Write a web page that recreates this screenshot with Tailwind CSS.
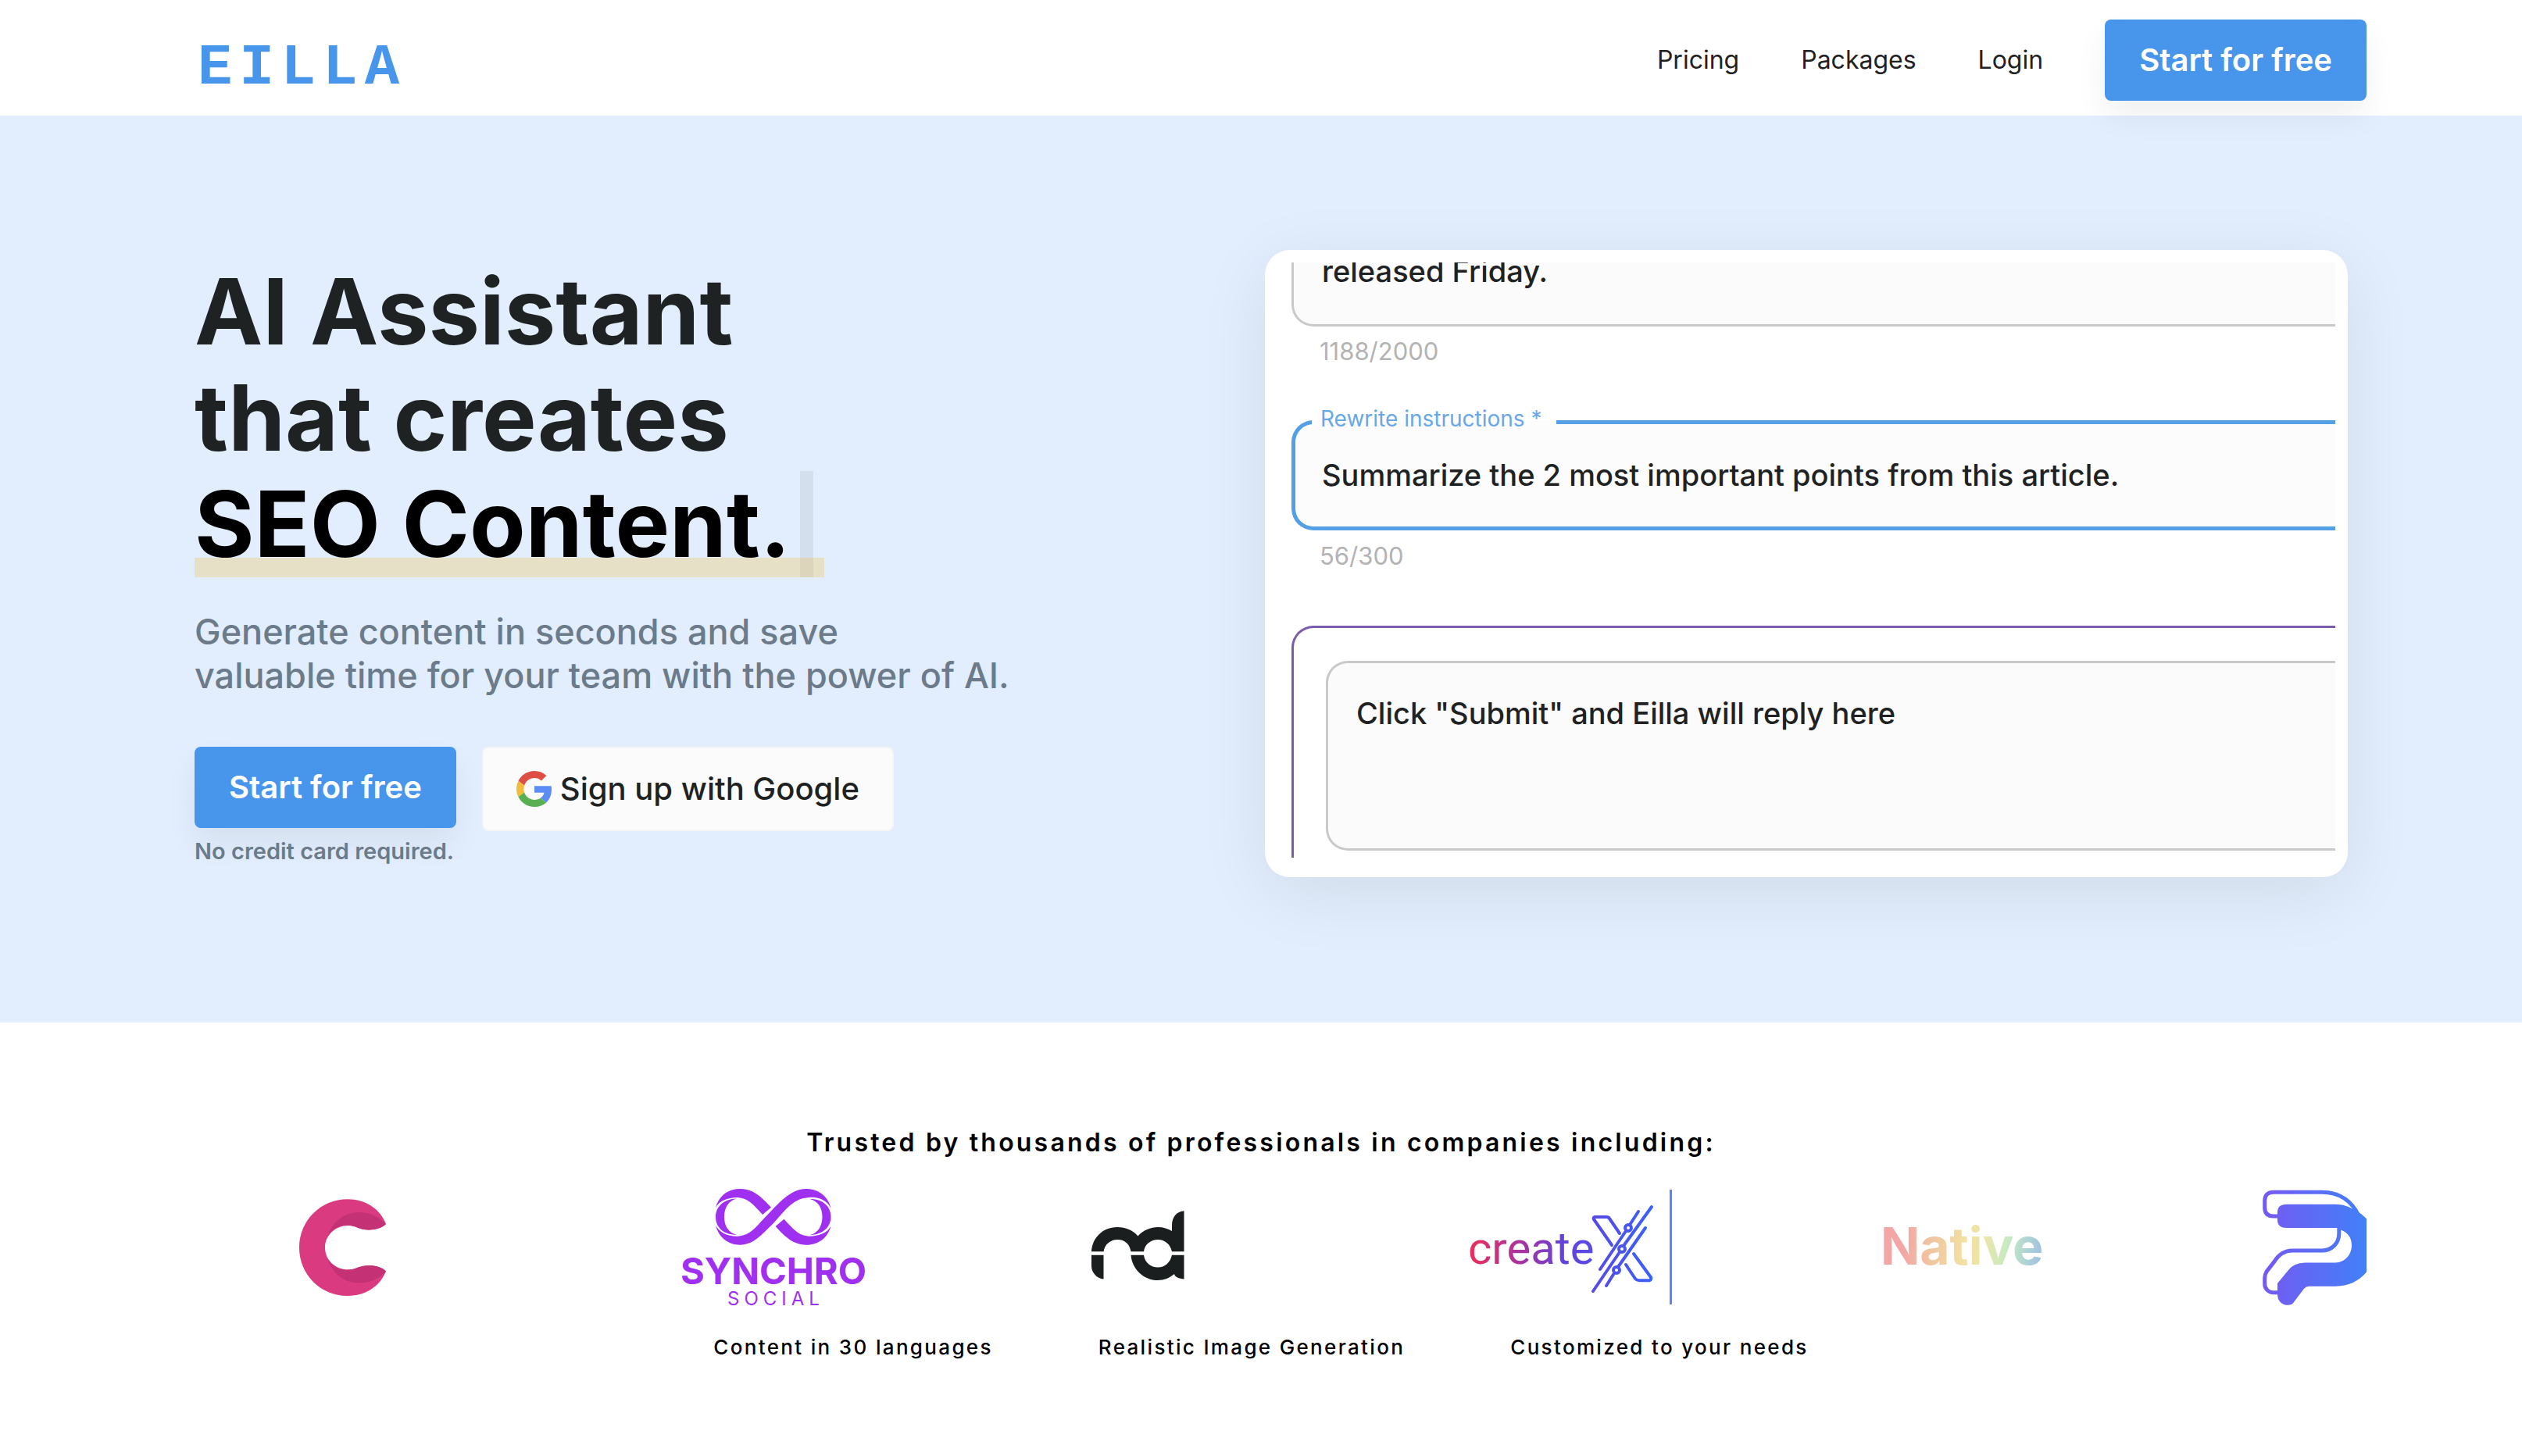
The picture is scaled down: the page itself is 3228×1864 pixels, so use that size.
<!DOCTYPE html>
<html lang="en">
<head>
<meta charset="utf-8">
<meta name="viewport" content="width=device-width, initial-scale=1">
<title>Eilla – AI Assistant that creates SEO Content</title>
<script src="https://cdn.jsdelivr.net/npm/@tailwindcss/browser@4"></script>
</head>
<body class="min-h-screen bg-white font-['Inter',sans-serif] text-[#1f2223]">

<header class="relative z-10 flex h-[148px] items-center justify-between bg-white pt-[6px] pl-[249px] pr-[199px]">
  <a href="#" class="pt-5 pl-1 font-['Liberation_Mono',monospace] text-[74px] leading-[64px] font-bold tracking-[9px] text-[#4895ec]">EILLA</a>
  <nav class="flex items-center gap-[79px] text-[32px] leading-[48px]">
    <a href="#">Pricing</a>
    <a href="#">Packages</a>
    <a href="#">Login</a>
    <button class="h-[104px] rounded-lg bg-[#4895ec] px-[44px] text-[40px] leading-[60px] font-semibold text-white shadow-[0_20px_40px_rgba(0,0,0,0.06)]">Start for free</button>
  </nav>
</header>

<main>
  <section class="grid grid-cols-[1370fr_1386fr] items-start bg-[#e2eefd] pt-[172px] pr-[223px] pb-[186px] pl-[249px]">
    <div class="pt-[11px]">
      <h1 class="text-[117px] leading-[136px] font-bold">
        AI Assistant<br>that creates<br>
        <span class="relative inline-flex pr-[14px] text-black">SEO Content.<span class="ml-3 w-[17px] bg-[#1f2223]/7"></span><span class="absolute inset-x-0 bottom-0 h-[25px] bg-[#f0c04a]/30"></span></span>
      </h1>
      <p class="mt-[42px] text-[45px] leading-[56px] font-medium text-[#6b7b8a]">Generate content in seconds and save<br>valuable time for your team with the power of AI.</p>
      <div class="mt-[63px] flex items-start gap-[33px]">
        <div>
          <button class="h-[104px] rounded-lg bg-[#4895ec] px-[44px] text-[40px] leading-[60px] font-semibold text-white shadow-[0_20px_40px_rgba(0,0,0,0.06)]">Start for free</button>
          <p class="mt-[9px] text-[29px] leading-[42px] font-semibold text-[#6b7b8a]">No credit card required.</p>
        </div>
        <button class="flex h-[108px] items-center gap-[10px] rounded-lg border-2 border-[#f4f5f6] bg-[#fbfbfb] px-[42px] text-[40px] leading-[60px] font-medium">
          <svg class="size-[46px]" viewBox="0 0 48 48" aria-hidden="true">
            <path fill="#dd4f43" d="M24 9.500c3.540 0 6.710 1.220 9.210 3.600l6.850-6.850C35.900 2.380 30.470 0 24 0 14.620 0 6.510 5.380 2.560 13.220l7.980 6.190C12.430 13.720 17.740 9.500 24 9.500z"/>
            <path fill="#5c8df5" d="M46.980 24.550c0-1.570-.150-3.090-.380-4.550H24v9.020h12.940c-.580 2.960-2.260 5.480-4.780 7.180l7.730 6c4.510-4.180 7.090-10.360 7.090-17.650z"/>
            <path fill="#f2bc3c" d="M10.530 28.590c-.480-1.450-.760-2.990-.760-4.590s.270-3.140.760-4.590l-7.980-6.190C.920 16.460 0 20.120 0 24c0 3.880.920 7.540 2.560 10.780l7.970-6.190z"/>
            <path fill="#58b052" d="M24 48c6.480 0 11.930-2.130 15.890-5.810l-7.730-6c-2.150 1.450-4.920 2.300-8.160 2.300-6.260 0-11.570-4.220-13.470-9.910l-7.980 6.190C6.510 42.620 14.620 48 24 48z"/>
          </svg>
          Sign up with Google
        </button>
      </div>
    </div>

    <div class="rounded-[32px] bg-white px-4 pt-4 pb-[25px] shadow-[0_20px_90px_rgba(0,0,0,0.08)]">
      <div class="flex h-[762px] flex-col overflow-hidden pl-[18px] text-[38px] leading-[48px] font-medium">
        <div class="h-[82px] shrink-0 overflow-hidden rounded-bl-[28px] border-b-[3px] border-l-[3px] border-[#c9c9c9] bg-[#fbfbfb]">
          <textarea readonly aria-label="Article" class="-mt-[13px] block h-20 w-full resize-none overflow-hidden pl-[36px] outline-none">released Friday.</textarea>
        </div>
        <p class="mt-3 pl-[36px] text-[31px] leading-10 font-normal text-[#b3b3b3]">1188/2000</p>
        <fieldset class="mt-[50px] h-[159px] shrink-0 rounded-l-[28px] border-[5px] border-r-0 border-[#549fe6] bg-[#fcfcfc]">
          <legend class="ml-[21px] pr-[18px] pl-[11px] pb-2 text-[28px] leading-8 font-normal text-[#68a8e6]"><label for="rewrite">Rewrite instructions *</label></legend>
          <input id="rewrite" type="text" readonly value="Summarize the 2 most important points from this article." class="mt-6 h-12 w-full bg-transparent pl-[34px] outline-none">
        </fieldset>
        <p class="mt-[13px] pl-[36px] text-[31px] leading-10 font-normal text-[#b3b3b3]">56/300</p>
        <div class="mt-[69px] flex-1 rounded-tl-[28px] border-t-[3px] border-l-[3px] border-[#7a5cab] pt-[42px] pl-[41px]">
          <textarea readonly aria-label="Eilla reply" class="block h-[243px] w-full resize-none overflow-hidden rounded-l-[28px] border-[3px] border-r-0 border-[#c9c9c9] bg-[#fbfbfb] pt-10 pl-[36px] outline-none">Click "Submit" and Eilla will reply here</textarea>
        </div>
      </div>
    </div>
  </section>

  <section class="pt-[130px]">
    <h2 class="text-center text-[32px] leading-[48px] font-semibold tracking-[0.1em] text-black">Trusted by thousands of professionals in companies including:</h2>

    <div class="mt-[35px] grid grid-cols-[487fr_527fr_485fr_529fr_485fr_133fr] pl-[383px] pr-[199px]">
      <svg class="h-[150px] w-28" viewBox="0 0 112 150" role="img" aria-label="C logo">
        <g transform="translate(0 12)">
          <path fill="#da3a80" d="M111 33C104 14 85 1.300 62 1.300 27 1.300 0 29 0 63.200S27 125 62 125c23 0 42-12.700 49-31.700-8-8-26-9.500-39-3.500C52 96 33 82 33 63.200 33 44.400 52 30 72 36.500c13 6.500 31 4.500 39-3.500z"/>
          <path id="fold" fill="#c43175" d="M111 33C103 24 90 18 77 18 58 18 42 30 36 49 44 36 58 31.500 72 36.500c13 6.500 31 4.500 39-3.500z"/>
          <use href="#fold" transform="matrix(1 0 0 -1 0 126.400)"/>
        </g>
      </svg>

      <svg class="h-[150px] w-60 overflow-visible" viewBox="0 0 240 150" fill="#a030f0" role="img" aria-label="Synchro Social">
        <g id="loop">
          <path d="M46 24C50 9 62 0 77 0c18 0 28 11 40 23.700L106 33C94 20 88 12 74 11 61 11 50 16 46 24z"/>
          <path d="M73 12.500C56 13 46 23 46 35.900S56 59 73 58.700C62 56 57 47 57 35.900S62 15 73 12.500z"/>
        </g>
        <use href="#loop" transform="rotate(180 119.750 35.850)"/>
        <path d="M46 47C50 62 62 71.700 77 71.700c18 0 28-13.700 42-26.700l16-18c13-13 20-15 31-16 12-1 23 4 27.500 14C190 9 177 0 162 0c-17 0-29 12-41 24l-17 18C93 55 85 60 74 60.700 62 61 51 56 46 47z"/>
        <text x="120" y="122" text-anchor="middle" class="text-[47px] font-bold">SYNCHRO</text>
        <text x="123" y="149" text-anchor="middle" class="text-[24px] tracking-[6px]">SOCIAL</text>
      </svg>

      <svg class="h-[150px] w-[119px]" viewBox="0 0 119 150" fill="#1a1e1f" role="img" aria-label="rd logo">
        <g transform="translate(0 27)">
          <path d="M0 53.300C1 36 14 22 33 22c11 0 20 4 26.500 11.500C66 26 76 22 85 22c7 0 13 2 18 5v-7c0-11 6-18 15.500-18.700v52H103C101 44 94 38 85 38s-17 6-18 15.300H50.500C49 44 43 38 33.500 38S17 44 15.500 53.300z"/>
          <path d="M0 57.700h15.500v30.800C7 88 0 80 0 72zM50.500 57.700H67c1 9.300 9 15.800 18 15.800s16-6.500 18-15.800h15.500v30.800C112 88 107 86 106 82c-6 5-13 8-21 8-18 0-33-14-34.500-32.300z"/>
        </g>
      </svg>

      <svg class="h-[150px] w-[260px] overflow-visible" viewBox="0 0 260 150" fill="none" role="img" aria-label="createX">
        <defs>
          <linearGradient id="cx" gradientUnits="userSpaceOnUse" x1="0" y1="0" x2="240" y2="0">
            <stop offset="0" stop-color="#ea2f5c"/><stop offset=".3" stop-color="#a034a6"/><stop offset=".5" stop-color="#6343dc"/><stop offset=".75" stop-color="#5050ea"/><stop offset="1" stop-color="#3565fb"/>
          </linearGradient>
        </defs>
        <text x="-3" y="96" fill="url(#cx)" class="font-['Roboto',sans-serif] text-[58px]">create</text>
        <g stroke="url(#cx)" stroke-width="4" stroke-linecap="round" stroke-linejoin="round">
          <path d="M191 57 178 38q-1-2-4-2h-15q-2 1-1 3l23 33M199 97l12 18q2 2.300 5 2.300h13q3-1 2-4L209 83"/>
          <path d="M215 29 204 46M199 54 166 103M232 23 196 73M191 81 157 131M224 50 189 100M184 108 174 124"/>
          <circle cx="202" cy="50" r="4"/><circle cx="194" cy="77" r="4"/><circle cx="187" cy="104" r="4"/>
        </g>
        <path stroke="#5b84f8" stroke-width="3" d="M256.500 1v147"/>
      </svg>

      <svg class="h-[150px] w-[208px] overflow-visible" viewBox="0 0 208 150" role="img" aria-label="Native">
        <defs>
          <linearGradient id="nv" gradientUnits="userSpaceOnUse" x1="0" y1="60" x2="205" y2="80">
            <stop offset=".12" stop-color="#f2a6a6"/><stop offset=".3" stop-color="#f0c5a0"/><stop offset=".5" stop-color="#f2dfa2"/><stop offset=".63" stop-color="#ebe6a8"/><stop offset=".78" stop-color="#c4eac4"/><stop offset="1" stop-color="#9cbfe4"/>
          </linearGradient>
        </defs>
        <text x="-4" y="97" fill="url(#nv)" class="text-[66px] font-bold">Native</text>
      </svg>

      <svg class="h-[150px] w-[133px]" viewBox="0 0 133 150" fill="none" role="img" aria-label="P logo">
        <defs>
          <linearGradient id="pg" gradientUnits="userSpaceOnUse" x1="0" y1="0" x2="133" y2="0">
            <stop offset="0" stop-color="#7659f2"/><stop offset="1" stop-color="#4180f9"/>
          </linearGradient>
        </defs>
        <path stroke="url(#pg)" stroke-width="5" d="M20 35h-6Q2.700 35 2.700 24v-9Q2.700 4.300 14 4.300h62C100 4.300 114 16 123 34M97.800 50v7C98 70 88 79 76 79H38c-10 0-18 6-23 14L5 106q-2.300 4-2.300 8v8c0 6 5.300 11 11.300 10.700h6"/>
        <path fill="url(#pg)" d="M31 19.700h62C103 20 109 22 114 25l12 7 7.500 6.700V106C124 118 110 124.700 93 124.700H59q-3 0-6 3L40 145C36 152 19 150 19 135v-14l14-17Q40 94.700 54 94.500h39C106 94 114 84 114 72 114 62 108 55 100 52.500L96 50H31Q19 50 19 40V30Q19 19.700 31 19.700z"/>
      </svg>
    </div>

    <ul class="mt-[33px] flex justify-center gap-[135px] text-[26px] leading-10 font-medium tracking-[0.09em] text-black">
      <li>Content in 30 languages</li>
      <li>Realistic Image Generation</li>
      <li>Customized to your needs</li>
    </ul>
  </section>
</main>
</body>
</html>
